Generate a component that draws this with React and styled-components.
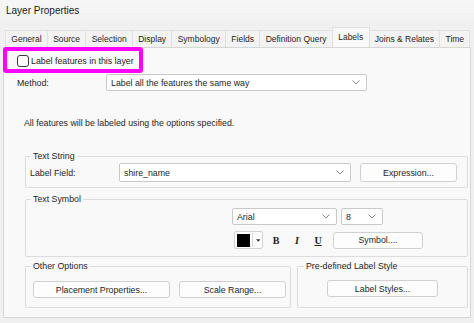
import React from "react";
import styled, { createGlobalStyle } from "styled-components";

const GlobalStyle = createGlobalStyle`
  html, body {
    margin: 0;
    padding: 0;
    background: #f0f0f0;
  }
  body {
    font-family: "Liberation Sans", Arial, sans-serif;
    font-size: 8.8px;
    color: #1e1e1e;
  }
`;

const Window = styled.div`
  width: 474px;
  height: 323px;
  display: flex;
  flex-direction: column;
  background: #f0f0f0;
  overflow: hidden;
`;

const TitleBar = styled.div`
  height: 21px;
  display: flex;
  align-items: center;
  padding-left: 6px;
  font-size: 10px;
  color: #1a1a1a;
  background: linear-gradient(#f6f6f6, #f2f2f2);
`;

const TabStrip = styled.div`
  height: 26px;
  display: flex;
  align-items: flex-end;
  padding-left: 5px;
  background: #f0f0f0;
`;

const Tab = styled.div`
  box-sizing: border-box;
  height: ${(p) => (p.$active ? "20px" : "17px")};
  display: flex;
  align-items: center;
  padding: 0 5.3px;
  padding-bottom: ${(p) => (p.$active ? "2px" : "0")};
  border: 1px solid #e0e0e0;
  border-bottom: none;
  margin-right: -1px;
  font-size: 8.5px;
  background: ${(p) => (p.$active ? "#f9f9f9" : "#f3f3f3")};
  position: relative;
  z-index: ${(p) => (p.$active ? 1 : 0)};
  white-space: nowrap;
`;

const Panel = styled.div`
  flex: 1;
  margin: 0 3px 5px;
  border: 1px solid #d6d6d6;
  background: #f9f9f9;
  display: flex;
  flex-direction: column;
`;

const Highlight = styled.div`
  box-sizing: border-box;
  width: 140px;
  height: 26px;
  margin: -1px 0 0 -1px;
  border: 4px solid #ff00ff;
  border-radius: 3px;
  display: flex;
  align-items: center;
  gap: 2px;
  padding: 1px 0 0 10px;
  position: relative;
  z-index: 2;
`;

const CheckBox = styled.span`
  box-sizing: border-box;
  width: 12px;
  height: 12px;
  border: 1px solid #3c3c3c;
  border-radius: 3px;
  background: #fff;
`;

const FieldRow = styled.div`
  display: flex;
  align-items: center;
  height: ${(p) => p.$h || 17}px;
  margin-top: ${(p) => p.$mt || 0}px;
  padding-left: ${(p) => p.$pl || 0}px;
`;

const FieldLabel = styled.span`
  width: ${(p) => p.$w}px;
  flex: none;
`;

const Select = styled.div`
  box-sizing: border-box;
  width: ${(p) => p.$w}px;
  height: ${(p) => p.$h || 17}px;
  margin-left: ${(p) => p.$ml || 0}px;
  flex: none;
  display: flex;
  align-items: center;
  justify-content: space-between;
  padding: 0 6px 0 4px;
  border: 1px solid #c9c9c9;
  border-radius: 2px;
  background: #fff;
`;

const Info = styled.div`
  margin-top: 27px;
  padding-left: 20px;
  line-height: 11px;
`;

const Group = styled.fieldset`
  box-sizing: border-box;
  min-width: 0;
  margin: ${(p) => p.$mt || 0}px 0 0 0;
  padding: 0;
  border: 1px solid #dcdcdc;
  border-radius: 2px;
  width: ${(p) => p.$w}px;
`;

const Legend = styled.legend`
  margin-left: ${(p) => (p.$ml !== undefined ? p.$ml : 5)}px;
  padding: 0 2px;
  line-height: 11px;
  font-size: 8.8px;
`;

const GroupRow = styled.div`
  display: flex;
  margin: ${(p) => p.$mt || 0}px 0 0 21px;
  gap: 6px;
`;

const GroupBody = styled.div`
  display: flex;
  flex-direction: ${(p) => (p.$col ? "column" : "row")};
  justify-content: ${(p) => p.$justify || "flex-start"};
  align-items: ${(p) => (p.$col ? "flex-start" : "center")};
  gap: ${(p) => p.$gap || 0}px;
  padding: ${(p) => p.$pad};
`;

const Button = styled.div`
  box-sizing: border-box;
  width: ${(p) => p.$w}px;
  height: ${(p) => p.$h || 17}px;
  margin-left: ${(p) => p.$ml || 0}px;
  flex: none;
  display: flex;
  align-items: center;
  justify-content: center;
  border: 1px solid #d0d0d0;
  border-radius: 3px;
  background: #fdfdfd;
`;

const SymbolRow = styled.div`
  display: flex;
  align-items: center;
  height: ${(p) => p.$h}px;
`;

const Swatch = styled.div`
  box-sizing: border-box;
  width: 29px;
  height: 18px;
  margin-left: 2px;
  margin-right: 2.5px;
  display: flex;
  align-items: center;
  padding: 0 2px;
  border: 1px solid #d3d3d3;
  border-radius: 2px;
  background: #fff;
`;

const Color = styled.span`
  width: 14px;
  height: 13px;
  background: #000;
`;

const SwatchDivider = styled.span`
  width: 1px;
  height: 14px;
  margin: 0 3px 0 2px;
  background: #d8d8d8;
`;

const StyleButton = styled.span`
  width: 21px;
  text-align: center;
  font-family: "Liberation Serif", "Times New Roman", serif;
  font-weight: bold;
  font-size: 10px;
  font-style: ${(p) => (p.$italic ? "italic" : "normal")};
  text-decoration: ${(p) => (p.$under ? "underline" : "none")};
  color: #222;
`;

const Chevron = () => (
  <svg width="8" height="5" viewBox="0 0 8 5">
    <polyline points="0.5,0.5 4,4 7.5,0.5" fill="none" stroke="#8a8a8a" strokeWidth="1" />
  </svg>
);

const Caret = () => (
  <svg width="5" height="3" viewBox="0 0 5 3">
    <polygon points="0,0 5,0 2.5,3" fill="#333" />
  </svg>
);

const tabs = [
  "General",
  "Source",
  "Selection",
  "Display",
  "Symbology",
  "Fields",
  "Definition Query",
  "Labels",
  "Joins & Relates",
  "Time",
];

const App = () => {
  return (
    <Window>
      <GlobalStyle />
      <TitleBar>Layer Properties</TitleBar>
      <TabStrip>
        {tabs.map((t) => (
          <Tab key={t} $active={t === "Labels"}>
            {t}
          </Tab>
        ))}
      </TabStrip>
      <Panel>
        <Highlight>
          <CheckBox />
          <span>Label features in this layer</span>
        </Highlight>

        <FieldRow $mt={1} $pl={13}>
          <FieldLabel $w={89}>Method:</FieldLabel>
          <Select $w={261}>
            <span>Label all the features the same way</span>
            <Chevron />
          </Select>
        </FieldRow>

        <Info>All features will be labeled using the options specified.</Info>

        <GroupRow $mt={22}>
          <Group $w={443}>
            <Legend>Text String</Legend>
            <GroupBody $pad="1px 0 5px 4px">
              <FieldLabel $w={89}>Label Field:</FieldLabel>
              <Select $w={232} $h={19}>
                <span>shire_name</span>
                <Chevron />
              </Select>
              <Button $w={97} $h={19} $ml={9}>
                Expression...
              </Button>
            </GroupBody>
          </Group>
        </GroupRow>

        <GroupRow $mt={6}>
          <Group $w={443}>
            <Legend>Text Symbol</Legend>
            <GroupBody $col $gap={6} $pad="3px 0 7px 206px">
              <SymbolRow $h={17}>
                <Select $w={105}>
                  <span>Arial</span>
                  <Chevron />
                </Select>
                <Select $w={42} $ml={4}>
                  <span>8</span>
                  <Chevron />
                </Select>
              </SymbolRow>
              <SymbolRow $h={18}>
                <Swatch>
                  <Color />
                  <SwatchDivider />
                  <Caret />
                </Swatch>
                <StyleButton>B</StyleButton>
                <StyleButton $italic>I</StyleButton>
                <StyleButton $under>U</StyleButton>
                <Button $w={90} $ml={4.5}>
                  Symbol....
                </Button>
              </SymbolRow>
            </GroupBody>
          </Group>
        </GroupRow>

        <GroupRow $mt={4}>
          <Group $w={266}>
            <Legend>Other Options</Legend>
            <GroupBody $gap={9} $pad="9px 0 9px 7px">
              <Button $w={137}>Placement Properties...</Button>
              <Button $w={107}>Scale Range...</Button>
            </GroupBody>
          </Group>
          <Group $w={171}>
            <Legend $ml={6}>Pre-defined Label Style</Legend>
            <GroupBody $justify="center" $pad="8px 0 10px 0">
              <Button $w={111}>Label Styles...</Button>
            </GroupBody>
          </Group>
        </GroupRow>
      </Panel>
    </Window>
  );
};

export default App;
